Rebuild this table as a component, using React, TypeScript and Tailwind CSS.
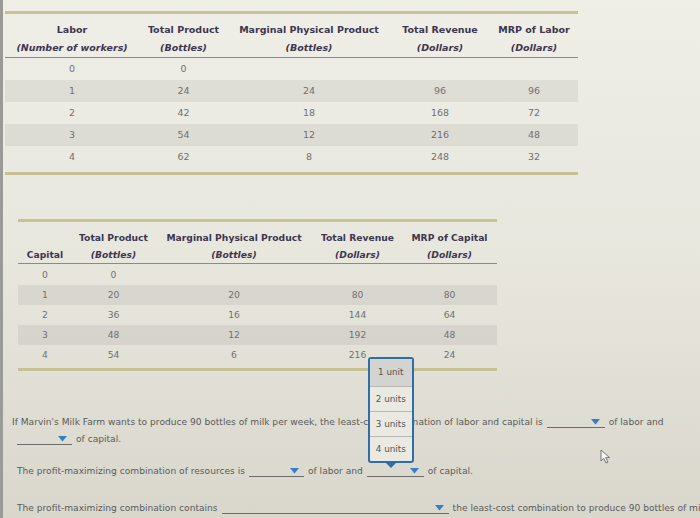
const laborRows = [
  ["0", "0", "", "", ""],
  ["1", "24", "24", "96", "96"],
  ["2", "42", "18", "168", "72"],
  ["3", "54", "12", "216", "48"],
  ["4", "62", "8", "248", "32"],
];

const capitalRows = [
  ["0", "0", "", "", ""],
  ["1", "20", "20", "80", "80"],
  ["2", "36", "16", "144", "64"],
  ["3", "48", "12", "192", "48"],
  ["4", "54", "6", "216", "24"],
];

function Caret() {
  return (
    <svg className="absolute right-[5px] bottom-[2px]" width="9" height="6" viewBox="0 0 9 6">
      <path d="M0 0H9L4.5 5.5Z" fill="#3a7cc0" />
    </svg>
  );
}

function Dropdown({ className, children }: { className: string; children?: React.ReactNode }) {
  return (
    <span className={`relative inline-block h-[12px] align-[-3px] border-b border-[#6d6d6d] ${className}`}>
      <Caret />
      {children}
    </span>
  );
}

function UnitMenu() {
  const units = ["2 units", "3 units", "4 units"];
  return (
    <div className="absolute bottom-[13px] left-[1px] w-[46px]">
      <div className="rounded-[3px] border-[2.5px] border-[#2e6ea6] bg-[#ebeae2] text-center text-[8.8px] text-[#555]">
        <div className="flex h-[27px] items-center justify-center bg-[#d3d3cf]">1 unit</div>
        {units.map((u) => (
          <div key={u} className="flex h-[25px] items-center justify-center border-t border-[#b8b8b2]">
            {u}
          </div>
        ))}
      </div>
      <svg className="absolute left-1/2 -bottom-[6px] -translate-x-1/2" width="12" height="7" viewBox="0 0 12 7">
        <path d="M0 0H12L6 6Z" fill="#2e6ea6" />
      </svg>
    </div>
  );
}

export default function App() {
  return (
    <div
      className="relative h-[518px] w-[700px] overflow-hidden border-l-[3px] border-[#9a9a96] bg-gradient-to-b from-[#efeee7] via-[#e8e7de] to-[#d9d7cc]"
      style={{ fontFamily: '"DejaVu Sans", Verdana, sans-serif' }}
    >
      {/* labor table */}
      <div className="ml-[2px] mt-[11px] w-[573px] border-t-[3px] border-[#c8c293] text-[9.5px]">
        <div className="grid grid-cols-[134px_89px_162px_100px_88px] border-b border-[#8a8a8a] pt-[7px] text-center font-bold leading-[18px] text-[#3d3650]">
          <div>
            <div>Labor</div>
            <div className="italic">(Number of workers)</div>
          </div>
          <div>
            <div>Total Product</div>
            <div className="italic">(Bottles)</div>
          </div>
          <div>
            <div>Marginal Physical Product</div>
            <div className="italic">(Bottles)</div>
          </div>
          <div>
            <div>Total Revenue</div>
            <div className="italic">(Dollars)</div>
          </div>
          <div>
            <div>MRP of Labor</div>
            <div className="italic">(Dollars)</div>
          </div>
        </div>
        {laborRows.map((r, i) => (
          <div
            key={i}
            className={`grid h-[22px] grid-cols-[134px_89px_162px_100px_88px] items-center text-center text-[#707070] ${i % 2 === 1 ? "bg-black/[0.06]" : ""}`}
          >
            {r.map((c, j) => (
              <div key={j}>{c}</div>
            ))}
          </div>
        ))}
        <div className="h-[4px] border-b-[3px] border-[#c8c293] box-content" />
      </div>

      {/* capital table */}
      <div className="ml-[15px] mt-[44px] w-[479px] border-t-[3px] border-[#c8c293] text-[9.2px]">
        <div className="grid grid-cols-[54px_83px_158px_89px_95px] items-end border-b border-[#8a8a8a] pt-[7px] text-center font-bold leading-[17px] text-[#3d3650]">
          <div>Capital</div>
          <div>
            <div>Total Product</div>
            <div className="italic">(Bottles)</div>
          </div>
          <div>
            <div>Marginal Physical Product</div>
            <div className="italic">(Bottles)</div>
          </div>
          <div>
            <div>Total Revenue</div>
            <div className="italic">(Dollars)</div>
          </div>
          <div>
            <div>MRP of Capital</div>
            <div className="italic">(Dollars)</div>
          </div>
        </div>
        {capitalRows.map((r, i) => (
          <div
            key={i}
            className={`grid grid-cols-[54px_83px_158px_89px_95px] items-center text-center text-[#707070] ${i === 0 ? "h-[21px]" : "h-[20px]"} ${i % 2 === 1 ? "bg-black/[0.06]" : ""}`}
          >
            {r.map((c, j) => (
              <div key={j}>{c}</div>
            ))}
          </div>
        ))}
        <div className="h-[3px] border-b-[3px] border-[#c8c293] box-content" />
      </div>

      {/* questions */}
      <div className="whitespace-nowrap text-[9.1px] leading-[17px] text-[#5a5a5a]">
        <div className="mt-[43px] pl-[9px]">
          If Marvin's Milk Farm wants to produce 90 bottles of milk per week, the least-cost combination of labor and capital is
          <Dropdown className="mx-[4px] w-[58px]" />
          of labor and
        </div>
        <div className="pl-[14px]">
          <Dropdown className="mr-[4px] w-[55px]" />
          of capital.
        </div>
        <div className="mt-[15px] pl-[14px]">
          The profit-maximizing combination of resources is
          <Dropdown className="mx-[4px] w-[55px]" />
          of labor and
          <Dropdown className="mx-[4px] w-[57px]">
            <UnitMenu />
          </Dropdown>
          of capital.
        </div>
        <div className="mt-[20px] pl-[14px]">
          The profit-maximizing combination contains
          <Dropdown className="mx-[4px] w-[227px]" />
          the least-cost combination to produce 90 bottles of milk.
        </div>
      </div>

      {/* mouse pointer */}
      <svg className="absolute left-[597px] top-[449px]" width="11" height="15" viewBox="0 0 11 15">
        <path d="M1 1V12L3.8 9.4L6 14L8 13.1L5.8 8.6H9.6Z" fill="#f4f4f0" stroke="#6a6a6a" strokeWidth="0.9" strokeLinejoin="round" />
      </svg>
    </div>
  );
}
